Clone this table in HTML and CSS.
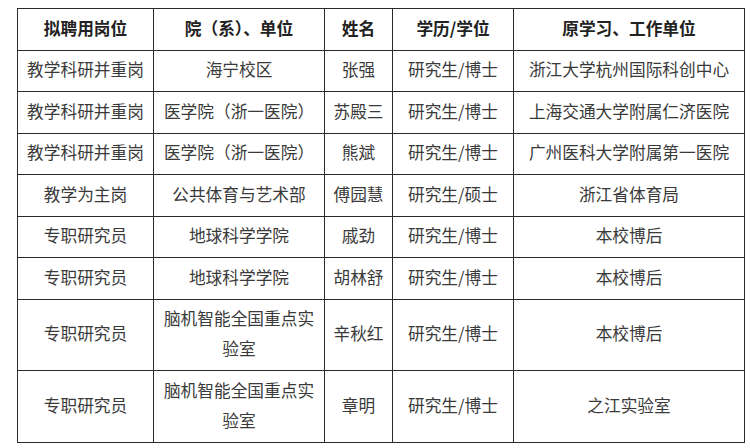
FILE: index.html
```html
<!DOCTYPE html>
<html lang="zh-CN">
<head>
<meta charset="utf-8">
<title>拟聘用人员</title>
<link rel="stylesheet" href="styles.css">
</head>
<body>
<table class="hire-table">
  <colgroup>
    <col class="c1"><col class="c2"><col class="c3"><col class="c4"><col class="c5">
  </colgroup>
  <thead>
    <tr><th>拟聘用岗位</th><th>院（系）、单位</th><th>姓名</th><th>学历/学位</th><th>原学习、工作单位</th></tr>
  </thead>
  <tbody>
    <tr><td>教学科研并重岗</td><td>海宁校区</td><td>张强</td><td>研究生/博士</td><td>浙江大学杭州国际科创中心</td></tr>
    <tr><td>教学科研并重岗</td><td>医学院（浙一医院）</td><td>苏殿三</td><td>研究生/博士</td><td>上海交通大学附属仁济医院</td></tr>
    <tr><td>教学科研并重岗</td><td>医学院（浙一医院）</td><td>熊斌</td><td>研究生/博士</td><td>广州医科大学附属第一医院</td></tr>
    <tr><td>教学为主岗</td><td>公共体育与艺术部</td><td>傅园慧</td><td>研究生/硕士</td><td>浙江省体育局</td></tr>
    <tr><td>专职研究员</td><td>地球科学学院</td><td>戚劲</td><td>研究生/博士</td><td>本校博后</td></tr>
    <tr><td>专职研究员</td><td>地球科学学院</td><td>胡林舒</td><td>研究生/博士</td><td>本校博后</td></tr>
    <tr><td>专职研究员</td><td>脑机智能全国重点实验室</td><td>辛秋红</td><td>研究生/博士</td><td>本校博后</td></tr>
    <tr><td>专职研究员</td><td>脑机智能全国重点实验室</td><td>章明</td><td>研究生/博士</td><td>之江实验室</td></tr>
  </tbody>
</table>
</body>
</html>
```

FILE: styles.css
```css
html, body {
  background: #ffffff;
}
body {
  margin: 8px 0 0 17px;
  font-family: "Noto Sans CJK SC", "Noto Sans", sans-serif;
  color: #3a3a3a;
}
.hire-table {
  border-collapse: collapse;
  table-layout: fixed;
  width: 727px;
}
.c1 { width: 136px; }
.c2 { width: 171px; }
.c3 { width: 68px; }
.c4 { width: 121px; }
.c5 { width: 231px; }
.hire-table th,
.hire-table td {
  border: 1px solid #2a2a2a;
  padding: 3.5px 6px 7px;
  line-height: 30px;
  font-size: 16.7px;
  text-align: center;
  vertical-align: middle;
}
.hire-table th {
  font-weight: bold;
  color: #222222;
}
```
